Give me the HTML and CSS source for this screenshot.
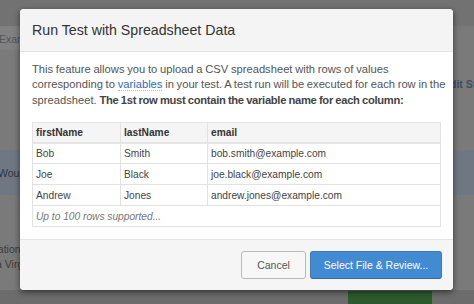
FILE: index.html
```html
<!DOCTYPE html>
<html>
<head>
<meta charset="utf-8">
<link rel="stylesheet" href="styles.css">
</head>
<body>
<div class="page">
  <div class="topbar"></div>
  <div class="tabs"><span class="tab">Example</span></div>
  <div class="linkrow"><span class="edit">Edit Steps</span></div>
  <div class="band"><span class="band-text">Would</span></div>
  <div class="lines">
    <div class="l1">Integration</div>
    <div class="l2">a Virginia</div>
  </div>
  <div class="bottom"><span class="green"></span></div>
</div>

<div class="modal">
  <div class="modal-header">Run Test with Spreadsheet Data</div>
  <div class="modal-body">
    <p class="intro">This feature allows you to upload a CSV spreadsheet with rows of values corresponding to <a class="vars">variables</a> in your test. A test run will be executed for each row in the spreadsheet. <b>The 1st row must contain the variable name for each column:</b></p>
    <table class="grid">
      <thead>
        <tr><th class="c1">firstName</th><th class="c2">lastName</th><th>email</th></tr>
      </thead>
      <tbody>
        <tr><td>Bob</td><td>Smith</td><td>bob.smith@example.com</td></tr>
        <tr><td>Joe</td><td>Black</td><td>joe.black@example.com</td></tr>
        <tr><td>Andrew</td><td>Jones</td><td>andrew.jones@example.com</td></tr>
        <tr><td class="note" colspan="3">Up to 100 rows supported...</td></tr>
      </tbody>
    </table>
  </div>
  <div class="modal-footer">
    <button class="btn cancel">Cancel</button>
    <button class="btn primary">Select File &amp; Review...</button>
  </div>
</div>
</body>
</html>
```
FILE: styles.css
```css
html, body {
  margin: 0;
  padding: 0;
}
body {
  width: 474px;
  height: 304px;
  overflow: hidden;
  background: #7a7a7a;
  font-family: "Helvetica Neue", "Liberation Sans", Arial, sans-serif;
  position: relative;
}
.page {
  width: 474px;
  height: 304px;
  display: flex;
  flex-direction: column;
  overflow: hidden;
}
.topbar {
  height: 26px;
  background: #727272;
  flex: none;
}
.tabs {
  height: 24px;
  flex: none;
  display: flex;
}
.tab {
  background: #818181;
  color: #555;
  font-size: 10.5px;
  line-height: 26px;
  margin-left: -1px;
  width: 80px;
}
.linkrow {
  height: 100px;
  flex: none;
  padding-left: 443px;
  box-sizing: border-box;
  white-space: nowrap;
}
.edit {
  display: block;
  margin-top: 28px;
  font-size: 10.5px;
  font-weight: bold;
  color: #38506a;
}
.band {
  height: 45px;
  flex: none;
  background: #6f7882;
  display: flex;
  align-items: center;
  white-space: nowrap;
}
.band-text {
  font-size: 10.5px;
  color: #2c3640;
  margin-left: -2px;
}
.lines {
  height: 95px;
  flex: none;
  padding-top: 47px;
  box-sizing: border-box;
  font-size: 10.5px;
  line-height: 15px;
  color: #3a3a3a;
  white-space: nowrap;
}
.l1 { margin-left: -29px; }
.l2 { margin-left: -4px; }
.bottom {
  flex: 1;
  background: #6c6c6c;
  padding-left: 348px;
  padding-top: 1px;
}
.green {
  display: block;
  width: 84px;
  height: 20px;
  background: #2d5a2d;
}

.modal {
  position: absolute;
  left: 20px;
  top: 9px;
  width: 433px;
  height: 281px;
  background: #fff;
  border-radius: 4px;
  box-shadow: 0 2px 6px rgba(0, 0, 0, 0.55);
  display: flex;
  flex-direction: column;
  overflow: hidden;
}
.modal-header {
  height: 43px;
  flex: none;
  box-sizing: border-box;
  background: #f4f4f4;
  border-bottom: 1px solid #e4e4e4;
  padding: 0 12px;
  font-size: 14.2px;
  line-height: 42px;
  color: #333;
}
.modal-body {
  flex: 1;
  padding: 10px 12px 0 12px;
}
.intro {
  margin: 0 -14px 0 0;
  font-size: 11.2px;
  line-height: 15.4px;
  word-spacing: -0.4px;
  color: #555;
}
.intro b {
  color: #444;
  letter-spacing: -0.3px;
}
.vars {
  color: #2d6db5;
  font-weight: normal;
  border-bottom: 1px dotted #9fbde0;
}
.grid {
  margin-top: 14px;
  width: 409px;
  border-collapse: collapse;
  border: 1px solid #dddddd;
  font-size: 10.2px;
  color: #333;
}
.grid th, .grid td {
  height: 21px;
  padding: 0 3px;
  text-align: left;
  border: 1px solid #e2e2e2;
  box-sizing: border-box;
}
.grid th {
  height: 20px;
  background: #f5f5f5;
  font-weight: bold;
  color: #333;
  border-bottom: 2px solid #e6e6e6;
}
.grid td { color: #444; }
.grid .c1 { width: 88px; }
.grid .c2 { width: 87px; }
.grid .note {
  font-style: italic;
  color: #777;
}
.modal-footer {
  height: 51px;
  flex: none;
  box-sizing: border-box;
  background: #f5f5f5;
  border-top: 1px solid #e4e4e4;
  display: flex;
  justify-content: flex-end;
  align-items: flex-start;
  gap: 4px;
  padding: 11px 11px 0 0;
}
.btn {
  height: 28px;
  border-radius: 3px;
  font-family: inherit;
  font-size: 10.5px;
  cursor: pointer;
  padding: 0;
}
.cancel {
  width: 65px;
  background: #f7f7f7;
  border: 1px solid #b8b8b8;
  color: #555;
}
.primary {
  width: 132px;
  background: #428bd3;
  border: 1px solid #3a7cbf;
  border-bottom-color: #2f6aa6;
  color: #fff;
  font-weight: 500;
}
```
